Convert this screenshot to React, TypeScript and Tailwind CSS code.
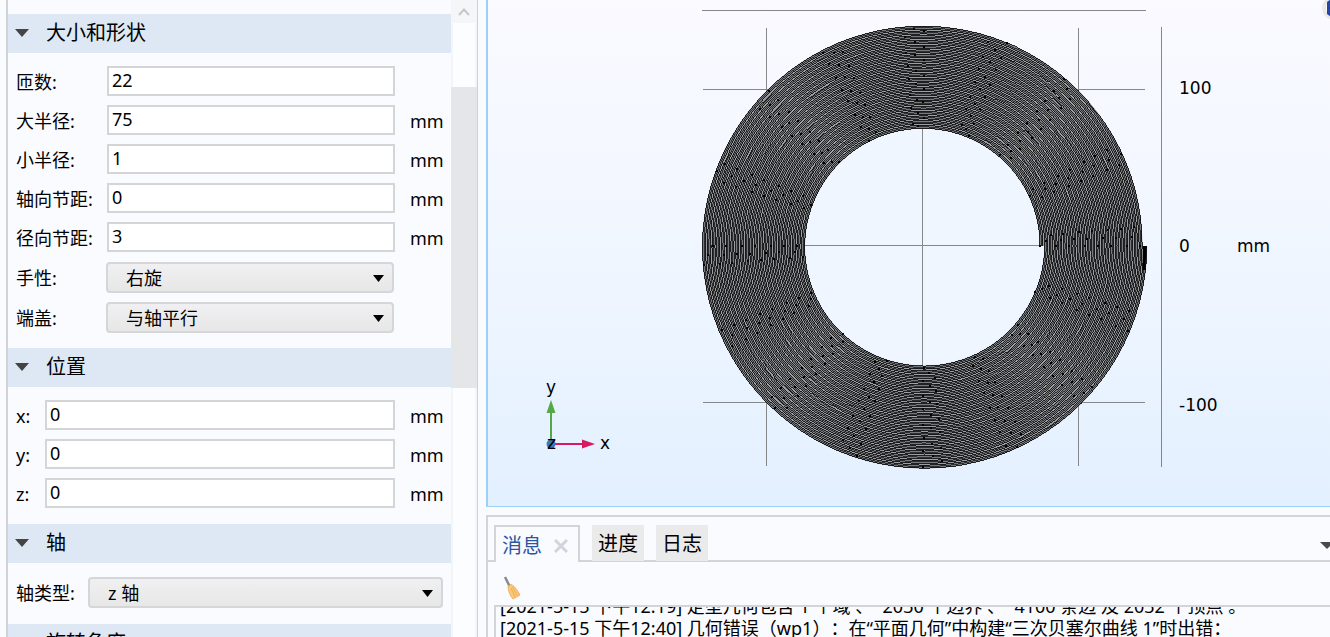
import React from "react";

const CX = 435.5;
const CY = 246;
const TURNS = 22;
const PITCH = 4.72;
const START_R = 118;

const SANS = "font-['Noto_Sans','Noto_Sans_CJK_SC',sans-serif]";

function spiral(offset: number, from = 0, to = TURNS) {
  const pts: string[] = [];
  const steps = Math.round((to - from) * 96);
  for (let i = 0; i <= steps; i++) {
    const t = from + i / 96;
    const r = START_R + PITCH * t + offset;
    const a = t * Math.PI * 2;
    pts.push((CX + r * Math.cos(a)).toFixed(2) + " " + (CY - r * Math.sin(a)).toFixed(2));
  }
  return "M" + pts.join("L");
}

const vertices = Array.from({ length: TURNS * 16 }, (_, i) => {
  const t = i / 16 + (i % 3) * 0.007;
  const r = START_R + PITCH * t + ((i % 5) - 2) * 0.6;
  const a = t * Math.PI * 2;
  return { x: CX + r * Math.cos(a), y: CY - r * Math.sin(a) };
});

function Coil() {
  return (
    <g fill="none">
      <path d={spiral(0)} stroke="#77797c" strokeWidth="3.6" />
      <path d={spiral(2.36, 0, TURNS - 1)} stroke="#9a9da2" strokeWidth="1.6" />
      <g stroke="#000" shapeRendering="crispEdges">
        <path d={spiral(-1.5)} strokeWidth="0.8" />
        <path d={spiral(0)} strokeWidth="0.6" />
        <path d={spiral(1.5)} strokeWidth="0.8" />
      </g>
      {vertices.map((v, i) => (
        <rect key={i} x={Math.round(v.x) - 1} y={Math.round(v.y) - 1} width="2" height="2" fill="#000" />
      ))}
      <path d="M655 246h3.500l-1 24h-3z" fill="#000" />
    </g>
  );
}

function Plot() {
  return (
    <svg width="842" height="506" viewBox="0 0 842 506" className="block font-['DejaVu_Sans',sans-serif] text-[17px]" aria-label="几何图形">
      <g stroke="#858789" strokeWidth="1" shapeRendering="crispEdges">
        <path d="M214 10.500H658" />
        <path d="M215 89.500H657M215 402.500H657M278.500 28V466M590.500 28V466" />
        <path d="M673.500 27V467" />
      </g>
      <circle cx={CX} cy={CY} r="118" fill="#f0f6ff" />
      <g stroke="#858789" shapeRendering="crispEdges">
        <path d="M316 245.500H554M434.500 128V365" />
      </g>
      <Coil />
      <g fill="#000">
        <text x="691" y="94">100</text>
        <text x="691" y="252">0</text>
        <text x="691" y="411">-100</text>
        <text x="749" y="252">mm</text>
      </g>
      <g>
        <path d="M63 440V412" stroke="#55a846" strokeWidth="2" />
        <path d="M63 400l4.500 13h-9z" fill="#55a846" />
        <path d="M67 444H95" stroke="#d81b60" strokeWidth="2" />
        <path d="M107 444l-13 -4.500v9z" fill="#d81b60" />
        <circle cx="63" cy="444" r="4.500" fill="#3f78b8" />
        <text x="58" y="393">y</text>
        <text x="112" y="449">x</text>
        <text x="59" y="449">z</text>
      </g>
      <g>
        <circle cx="846" cy="8" r="12" fill="#ece9e6" />
        <circle cx="847" cy="8" r="9" fill="#fff" />
        <path d="M839 2l4-3v18l-4-3z" fill="#2747a8" />
      </g>
    </svg>
  );
}

function Header({ title }: { title: string }) {
  return (
    <button type="button" className="flex h-[39px] w-full shrink-0 items-center bg-[#dee8f4] pb-[2px] pl-[7px] text-left text-[20px] leading-[30px]">
      <svg width="14" height="8" viewBox="0 0 14 8" className="mt-px mr-[17px]">
        <path d="M0 0h14l-7 8z" fill="#444" />
      </svg>
      {title}
    </button>
  );
}

type FieldProps = { id: string; label: string; value: string; unit?: string; labelWidth: string };

function Field({ id, label, value, unit, labelWidth }: FieldProps) {
  return (
    <div className="flex h-[30px] items-center">
      <label htmlFor={id} className={labelWidth + " shrink-0 pt-[2px] leading-[26px]"}>{label}</label>
      <input
        id={id}
        defaultValue={value}
        className="h-[30px] min-w-0 flex-1 border-2 border-[#d4d5d7] bg-white pb-[2px] pl-[3px] leading-[24px] outline-none"
      />
      <span className="w-14 shrink-0 pt-[2px] pl-[15px] leading-[26px]">{unit}</span>
    </div>
  );
}

type PickProps = { id: string; label: string; options: string[]; labelWidth: string; end: string };

function Pick({ id, label, options, labelWidth, end }: PickProps) {
  return (
    <div className={"flex h-[31px] items-center " + end}>
      <label htmlFor={id} className={labelWidth + " shrink-0 leading-[26px]"}>{label}</label>
      <div className="relative min-w-0 flex-1">
        <select
          id={id}
          className="block h-[31px] w-full appearance-none rounded-[4px] border-2 border-[#d5d6d8] bg-linear-to-b from-[#f0f0f2] to-[#e7e7e7] pl-[18px] leading-[26px] outline-none"
        >
          {options.map((o) => (
            <option key={o}>{o}</option>
          ))}
        </select>
        <svg width="11" height="7" viewBox="0 0 11 7" className="pointer-events-none absolute top-[13px] right-[10px]">
          <path d="M0 0h11L5.500 7z" fill="#000" />
        </svg>
      </div>
    </div>
  );
}

function Settings() {
  return (
    <section className="ml-[6px] flex w-[472px] shrink-0 overflow-hidden border-r border-l-2 border-r-[#cfd0d2] border-l-[#d2d3d5]">
      <div className="flex min-w-0 flex-1 flex-col pt-[14px] text-[18px]">
        <Header title="大小和形状" />
        <div className="flex flex-col gap-[10px] pt-[13px] pb-[15px] pl-2">
          <div className="flex flex-col gap-[9px]">
            <Field id="turns" label="匝数:" value="22" labelWidth="w-[91px]" />
            <Field id="major" label="大半径:" value="75" unit="mm" labelWidth="w-[91px]" />
            <Field id="minor" label="小半径:" value="1" unit="mm" labelWidth="w-[91px]" />
            <Field id="axial" label="轴向节距:" value="0" unit="mm" labelWidth="w-[91px]" />
            <Field id="radial" label="径向节距:" value="3" unit="mm" labelWidth="w-[91px]" />
          </div>
          <div className="flex flex-col gap-[9px]">
            <Pick id="hand" label="手性:" options={["右旋", "左旋"]} labelWidth="w-[90px]" end="pr-[57px]" />
            <Pick id="caps" label="端盖:" options={["与轴平行", "与脊线垂直"]} labelWidth="w-[90px]" end="pr-[57px]" />
          </div>
        </div>
        <Header title="位置" />
        <div className="flex flex-col gap-[9px] pt-[13px] pb-4 pl-2">
          <Field id="px" label="x:" value="0" unit="mm" labelWidth="w-[29px]" />
          <Field id="py" label="y:" value="0" unit="mm" labelWidth="w-[29px]" />
          <Field id="pz" label="z:" value="0" unit="mm" labelWidth="w-[29px]" />
        </div>
        <Header title="轴" />
        <div className="pt-[14px] pb-4 pl-2">
          <Pick id="axis" label="轴类型:" options={["z 轴", "x 轴", "y 轴"]} labelWidth="w-[72px]" end="pr-2" />
        </div>
        <Header title="旋转角度" />
      </div>
      <div className="flex w-[26px] shrink-0 flex-col">
        <button type="button" aria-label="向上滚动" className="flex h-[23px] shrink-0 items-center justify-center bg-[#f5f6f8]">
          <svg width="12" height="8" viewBox="0 0 12 8">
            <path d="M1 7l5-5.500 5 5.500" fill="none" stroke="#c6c7ca" strokeWidth="2" />
          </svg>
        </button>
        <div className="h-16 shrink-0 border-x-2 border-[#f4f5f8] bg-[#fcfdff]" />
        <div className="h-[301px] shrink-0 bg-[#e5e6e8]" />
        <div className="flex-1 border-x-2 border-[#f4f5f8] bg-[#fcfdff]" />
      </div>
    </section>
  );
}

const LOG = [
  "[2021-5-15 下午12:19] 定型几何包含 1 个域 、  2030 个边界 、  4100 条边 及 2032 个顶点 。",
  "[2021-5-15 下午12:40] 几何错误（wp1）：在“平面几何”中构建“三次贝塞尔曲线 1”时出错：",
];

function Messages() {
  return (
    <section className="flex h-[122px] shrink-0 flex-col overflow-hidden border-t-2 border-l-2 border-[#d3d4d6]">
      <div className="flex h-[45px] shrink-0 border-b-2 border-[#d3d4d6] pt-2 pl-[6px] text-[20px] leading-[30px]">
        <button type="button" className="-mb-[2px] flex w-[86px] items-center gap-3 border-2 border-b-0 border-[#d3d4d6] bg-[#fafbff] pt-[3px] pl-[6px] text-[#2a55a0]">
          消息
          <svg width="14" height="14" viewBox="0 0 14 14" aria-label="关闭">
            <path d="M1 1l12 12M13 1L1 13" stroke="#d0d4dc" strokeWidth="3" />
          </svg>
        </button>
        <button type="button" className="ml-3 h-9 w-[52px] bg-[#eaeaea] pt-px">进度</button>
        <button type="button" className="ml-3 h-9 w-[52px] bg-[#eaeaea] pt-px">日志</button>
        <button type="button" aria-label="更多" className="-mr-1 ml-auto pt-[6px]">
          <svg width="14" height="7" viewBox="0 0 14 7">
            <path d="M0 0h14l-7 7z" fill="#4a4a4a" />
          </svg>
        </button>
      </div>
      <div className="flex h-[43px] shrink-0 items-center pt-2 pl-4">
        <button type="button" aria-label="清除">
          <svg width="17" height="24" viewBox="0 0 17 24">
            <path d="M1 1l4.500 9" stroke="#858b92" strokeWidth="2.500" />
            <path d="M4 10l3-1.500c3 1 6 5 9 10.500l-7 4c-3-3-5-8-5-13z" fill="#fbc878" stroke="#e3a34c" strokeWidth="0.700" />
            <path d="M7 12l4 9M8.500 11l5 8.500" stroke="#e5a64e" strokeWidth="0.800" />
          </svg>
        </button>
      </div>
      <div className="ml-[6px] min-h-0 flex-1 overflow-hidden border-t-2 border-l-2 border-[#d3d4d6] pl-1 text-[18px] leading-[22px] whitespace-pre [text-spacing-trim:space-all]">
        <div className="-mt-3">
          {LOG.map((line) => (
            <p key={line}>{line}</p>
          ))}
        </div>
      </div>
    </section>
  );
}

export default function App() {
  return (
    <main className={"flex h-screen overflow-hidden bg-[#fafbff] text-black " + SANS}>
      <Settings />
      <div className="ml-2 flex min-w-0 flex-1 flex-col gap-2">
        <section className="min-h-0 flex-1 overflow-hidden border-b border-l-2 border-[#9bd0f7] bg-linear-to-b from-[#fafaff] via-[#f0f6ff] to-[#e3f0ff]">
          <Plot />
        </section>
        <Messages />
      </div>
    </main>
  );
}
